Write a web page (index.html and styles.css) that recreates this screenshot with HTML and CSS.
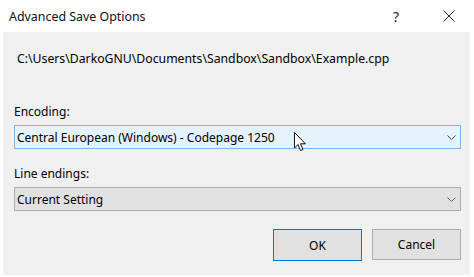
FILE: index.html
```html
<!DOCTYPE html>
<html>
<head>
<meta charset="utf-8">
<link rel="stylesheet" href="styles.css">
</head>
<body>
<div class="dialog">
  <div class="titlebar">
    <span class="title">Advanced Save Options</span>
    <span class="help">?</span>
    <span class="close">
      <svg width="12" height="12" viewBox="0 0 12 12"><path d="M0.5 0.5 L11.5 11.5 M11.5 0.5 L0.5 11.5" stroke="#222" stroke-width="1" fill="none"/></svg>
    </span>
  </div>
  <div class="panel">
    <div class="path">C:\Users\DarkoGNU\Documents\Sandbox\Sandbox\Example.cpp</div>
    <div class="label label-enc">Encoding:</div>
    <div class="combo combo-active">
      <span class="combo-text">Central European (Windows) - Codepage 1250</span>
      <svg class="chev" width="9" height="5" viewBox="0 0 9 5"><path d="M0.5 0.5 L4.5 4.5 L8.5 0.5" stroke="#444" stroke-width="1" fill="none"/></svg>
      <svg class="cursor" width="13" height="20" viewBox="0 0 13 20"><path d="M0.5 0.5 L0.5 16 L4 12.5 L6.5 18.5 L9 17.5 L6.5 11.8 L11.5 11.8 Z" fill="#fff" stroke="#111" stroke-width="1" stroke-linejoin="miter"/></svg>
    </div>
    <div class="label label-line">Line endings:</div>
    <div class="combo">
      <span class="combo-text">Current Setting</span>
      <svg class="chev" width="9" height="5" viewBox="0 0 9 5"><path d="M0.5 0.5 L4.5 4.5 L8.5 0.5" stroke="#666" stroke-width="1" fill="none"/></svg>
    </div>
    <div class="buttons">
      <div class="btn btn-default">OK</div>
      <div class="btn">Cancel</div>
    </div>
  </div>
</div>
</body>
</html>
```
FILE: styles.css
```css
html, body {
  margin: 0;
  padding: 0;
  background: #ffffff;
}
body {
  width: 474px;
  height: 277px;
  overflow: hidden;
  font-family: "Noto Sans", "Open Sans", sans-serif;
  font-size: 12px;
  color: #000;
}
.dialog {
  display: flex;
  flex-direction: column;
  height: 277px;
}
.titlebar {
  height: 32px;
  display: flex;
  align-items: center;
  padding-left: 9px;
  background: #fff;
}
.title {
  font-size: 12.4px;
  flex: 1;
  color: #111;
}
.help {
  font-size: 14px;
  width: 30px;
  text-align: center;
  color: #222;
  margin-right: 32px;
}
.close {
  width: 12px;
  margin-right: 19px;
  display: flex;
}
.panel {
  margin: 0 4px 2px 3px;
  flex: 1;
  background: #f0f0f0;
  padding: 18px 9px 0 11px;
  display: flex;
  flex-direction: column;
}
.path {
  padding-left: 3px;
  line-height: 18px;
  font-size: 12.25px;
}
.label {
  line-height: 18px;
}
.label-enc {
  margin-top: 35px;
}
.label-line {
  margin-top: 16px;
}
.combo {
  position: relative;
  height: 22px;
  margin-top: 4px;
  border: 1px solid #adadad;
  background: #e1e1e1;
  display: flex;
  align-items: center;
  padding: 0 0 0 2px;
}
.combo-active {
  background: #e5f1fb;
  border-color: #7eb4ea;
}
.combo-text {
  flex: 1;
}
.chev {
  margin-right: 4px;
}
.cursor {
  position: absolute;
  left: 279px;
  top: 6px;
}
.buttons {
  display: flex;
  justify-content: flex-end;
  gap: 10px;
  margin-top: 18px;
}
.btn {
  width: 87px;
  height: 29px;
  border: 1px solid #adadad;
  background: #e1e1e1;
  display: flex;
  align-items: center;
  justify-content: center;
}
.btn-default {
  border: 1px solid #0078d7;
  height: 30px;
}
```
